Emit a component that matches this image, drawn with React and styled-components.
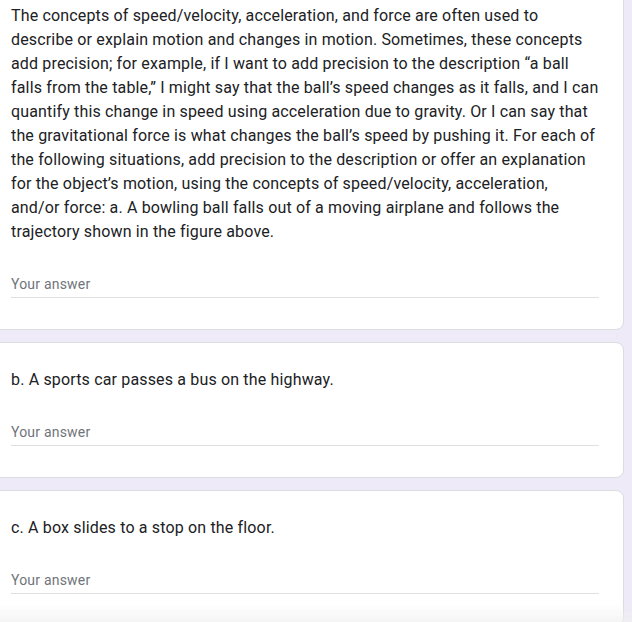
import React from "react";
import styled, { createGlobalStyle } from "styled-components";

const Global = createGlobalStyle`
  html, body { margin: 0; padding: 0; background: #eeeaf8; overflow: hidden; }
  body { font-family: Roboto, "Liberation Sans", Arial, sans-serif; }
`;

const Page = styled.main`
  display: flex;
  flex-direction: column;
  gap: 12px;
  margin: -22px 8px 0 -14px;
`;

const Card = styled.section`
  background: #fff;
  border: 1px solid #dadce0;
  border-radius: 8px;
  padding: 25px 24px 31px;
  display: flex;
  flex-direction: column;
`;

const Question = styled.div`
  font-size: 16px;
  line-height: 24px;
  color: #202124;
  letter-spacing: 0.16px;
  margin-bottom: 28px;
`;

const Answer = styled.div`
  font-size: 14px;
  line-height: 24px;
  color: #70757a;
  letter-spacing: 0.2px;
  border-bottom: 1px solid #e0e0e0;
  height: 26px;
  box-sizing: border-box;
`;

const Fade = styled.div`
  position: fixed;
  left: 0;
  right: 0;
  bottom: 0;
  height: 18px;
  background: linear-gradient(to bottom, rgba(240, 240, 240, 0), rgba(240, 240, 240, 0.7));
  pointer-events: none;
`;

const questions = [
  "The concepts of speed/velocity, acceleration, and force are often used to describe or explain motion and changes in motion. Sometimes, these concepts add precision; for example, if I want to add precision to the description \u201ca ball falls from the table,\u201d I might say that the ball\u2019s speed changes as it falls, and I can quantify this change in speed using acceleration due to gravity. Or I can say that the gravitational force is what changes the ball\u2019s speed by pushing it. For each of the following situations, add precision to the description or offer an explanation for the object\u2019s motion, using the concepts of speed/velocity, acceleration, and/or force: a. A bowling ball falls out of a moving airplane and follows the trajectory shown in the figure above.",
  "b. A sports car passes a bus on the highway.",
  "c. A box slides to a stop on the floor.",
];

export default function App() {
  return (
    <>
      <Global />
      <Page>
        {questions.map((q, i) => (
          <Card key={i}>
            <Question>{q}</Question>
            <Answer>Your answer</Answer>
          </Card>
        ))}
      </Page>
      <Fade />
    </>
  );
}
